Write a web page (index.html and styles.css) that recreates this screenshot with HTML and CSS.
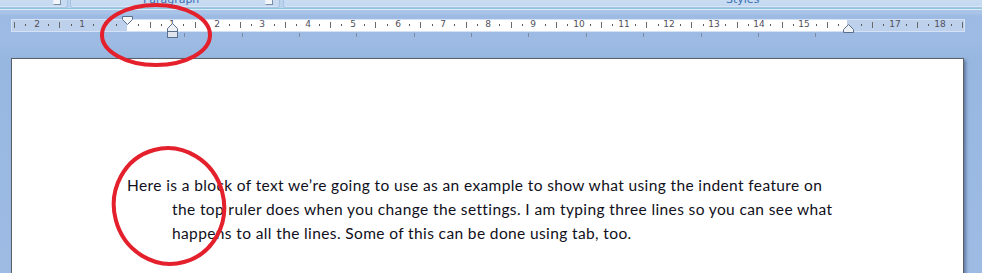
FILE: index.html
```html
<!DOCTYPE html>
<html>
<head>
<meta charset="utf-8">
<link rel="stylesheet" href="styles.css">
</head>
<body>
<div class="ribbon">
  <div class="group g1"><span class="launcher"></span></div>
  <div class="group g2"><span class="label">Paragraph</span><span class="launcher"></span></div>
  <div class="group g3"><span class="label">Styles</span></div>
</div>
<div class="ribbon-edge"></div>
<div class="ruler-area">
  <div class="ruler">
    <div class="margin-left"></div>
    <div class="text-zone"></div>
    <div class="margin-right"></div>
    <div class="marks" id="marks"></div>
    <svg class="marker first-indent" width="11" height="9" viewBox="0 0 11 9"><path d="M0.5 0.5 H10.5 V3.5 L5.5 8.5 L0.5 3.5 Z" fill="#f4f6f9" stroke="#5a6f8e"/></svg>
    <svg class="marker hanging" width="11" height="15" viewBox="0 0 11 15"><path d="M5.5 0.5 L10.5 5.5 V8.5 H0.5 V5.5 Z" fill="#eef1f5" stroke="#5a6f8e"/><rect x="0.5" y="8.5" width="10" height="6" fill="#dfe4ec" stroke="#5a6f8e"/></svg>
    <svg class="marker right-indent" width="11" height="9" viewBox="0 0 11 9"><path d="M5.5 0.5 L10.5 5.5 V8.5 H0.5 V5.5 Z" fill="#eef1f5" stroke="#5a6f8e"/></svg>
  </div>
  <div class="tabs" id="tabs"></div>
</div>
<div class="page">
  <p class="para">
    <span class="line first">Here is a block of text we’re going to use as an example to show what using the indent feature on</span>
    <span class="line cont">the top ruler does when you change the settings. I am typing three lines so you can see what</span>
    <span class="line cont">happens to all the lines. Some of this can be done using tab, too.</span>
  </p>
</div>
<svg class="annot" width="982" height="273" viewBox="0 0 982 273">
  <ellipse cx="156" cy="35" rx="54" ry="30" fill="none" stroke="#e3202b" stroke-width="4"/>
  <ellipse cx="169" cy="206" rx="55" ry="58" transform="rotate(-15 169 206)" fill="none" stroke="#e3202b" stroke-width="4"/>
</svg>
<script src="script.js"></script>
</body>
</html>
```
FILE: styles.css
```css
html, body {
  margin: 0;
  padding: 0;
  width: 982px;
  height: 273px;
  overflow: hidden;
}
body {
  position: relative;
  background: linear-gradient(#a9c4e8 0px, #a9c4e8 13px, #9cbae3 16px, #9dbbe3 40px, #98b7e0 58px, #9dbbe3 273px);
  font-family: "Liberation Sans", Arial, sans-serif;
}
.ribbon {
  display: flex;
  height: 8px;
  background: #bcd3ee;
  overflow: hidden;
}
.group {
  position: relative;
  height: 8px;
  background: linear-gradient(#c9dcf2, #c3d8f0);
  border: 1px solid #a8c2e4;
  border-top: none;
  border-radius: 0 0 3px 3px;
  box-sizing: border-box;
  box-shadow: inset 0 -1px 0 #d9e7f7;
}
.g1 { width: 70px; margin-left: -2px; }
.g2 { width: 210px; margin-left: 2px; }
.g3 { flex: 1; margin-left: 3px; margin-right: -4px; }
.label {
  position: absolute;
  top: -7px;
  font-family: "DejaVu Sans", sans-serif;
  font-size: 11px;
  line-height: 13px;
  color: #3b6fb4;
}
.g2 .label { left: 72px; }
.g3 .label { left: 442px; }
.launcher {
  position: absolute;
  right: 6px;
  top: -3px;
  width: 6px;
  height: 6px;
  border: 1px solid #7b8ea8;
  border-top-color: #e8eef6;
  border-left-color: #e8eef6;
  background: #f2f5f9;
}
.ribbon-edge {
  height: 2px;
  border-top: 1px solid #8ec5da;
  background: #dbeef7;
  box-sizing: border-box;
}
.ruler-area {
  position: relative;
  height: 48px;
}
.ruler {
  position: absolute;
  left: 11px;
  top: 9px;
  width: 954px;
  height: 13px;
  display: flex;
  box-sizing: border-box;
  border: 1px solid #d5e2f3;
}
.margin-left { width: 115px; background: #bdd1ed; }
.text-zone { width: 720px; background: #ffffff; }
.margin-right { flex: 1; background: #bdd1ed; }
.marks {
  position: absolute;
  left: -1px;
  top: -1px;
  width: 954px;
  height: 13px;
}
.tick {
  position: absolute;
  background: #5a5a5a;
}
.dot { top: 5px; width: 1px; height: 2px; }
.half { top: 3px; width: 1px; height: 6px; background: #6a6a6a; }
.num {
  position: absolute;
  top: -1px;
  width: 20px;
  margin-left: -10px;
  text-align: center;
  font-family: "DejaVu Sans", sans-serif;
  font-size: 9px;
  line-height: 13px;
  color: #50505c;
}
.marker { position: absolute; }
.first-indent { left: 110px; top: -4px; }
.hanging { left: 155px; top: 3px; }
.right-indent { left: 831px; top: 4px; }
.tabs {
  position: absolute;
  left: 0;
  top: 23px;
  width: 982px;
  height: 4px;
}
.tab {
  position: absolute;
  top: 0;
  width: 1px;
  height: 4px;
  background: #7f8aa0;
}
.page {
  margin-left: 11px;
  width: 953px;
  height: 400px;
  box-sizing: border-box;
  background: #ffffff;
  border: 1px solid #5b5f66;
  box-shadow: 2px 2px 3px rgba(50, 70, 110, 0.55);
}
.para {
  margin: 0;
  padding: 114px 0 0 115px;
  font-family: Lato, "Liberation Sans", sans-serif;
  font-size: 15.5px;
  letter-spacing: 0.38px;
  line-height: 24px;
  color: #101020;
}
.line { display: block; white-space: nowrap; }
.cont { padding-left: 45px; }
.annot {
  position: absolute;
  left: 0;
  top: 0;
  pointer-events: none;
}
```
FILE: script.js
```js
const marks = document.getElementById('marks');
const unit = 45.15;
const zero = 116;
for (let q = -10; q <= 74; q++) {
  const v = q / 4;
  const x = Math.round(zero + v * unit);
  if (x < 2 || x > 952) continue;
  const el = document.createElement('span');
  if (q % 4 === 0) {
    if (v === 0 || v === 16) continue;
    el.className = 'num';
    el.textContent = Math.abs(v);
  } else if (q % 2 === 0) {
    el.className = 'tick half';
  } else {
    el.className = 'tick dot';
  }
  el.style.left = x + 'px';
  marks.appendChild(el);
}
const tabs = document.getElementById('tabs');
for (let k = 1; k <= 12; k++) {
  const t = document.createElement('span');
  t.className = 'tab';
  t.style.left = Math.round(127 + k * 57.35) + 'px';
  tabs.appendChild(t);
}
```
